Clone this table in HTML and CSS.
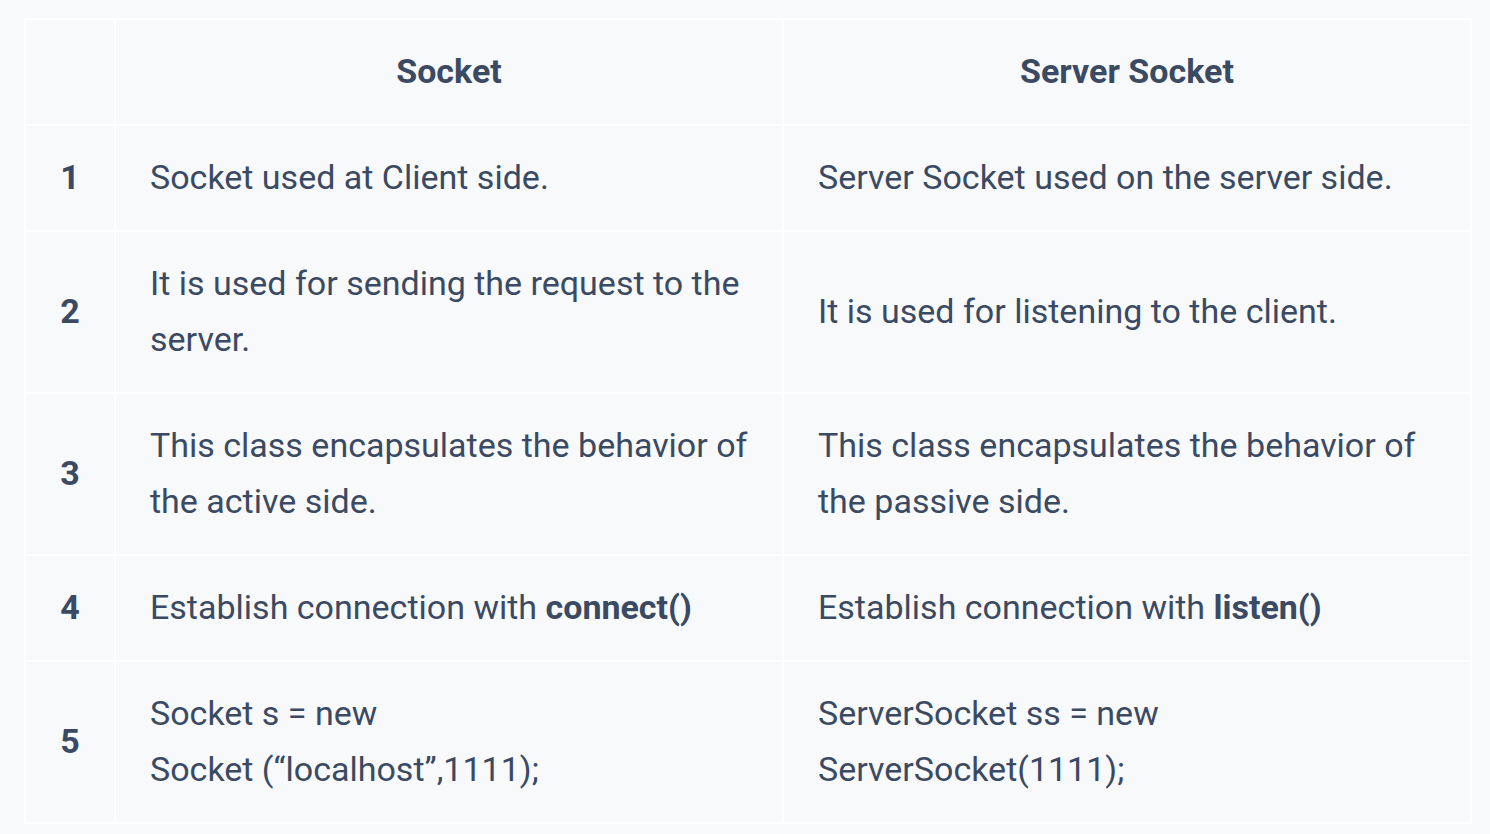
FILE: index.html
```html
<!DOCTYPE html>
<html>
<head>
<meta charset="utf-8">
<link rel="stylesheet" href="styles.css">
</head>
<body>
<div class="table">
  <div class="cell num"><div></div></div>
  <div class="cell head"><div>Socket</div></div>
  <div class="cell head"><div>Server Socket</div></div>

  <div class="cell num"><div>1</div></div>
  <div class="cell"><div>Socket used at Client side.</div></div>
  <div class="cell"><div>Server Socket used on the server side.</div></div>

  <div class="cell num"><div>2</div></div>
  <div class="cell"><div>It is used for sending the request to the server.</div></div>
  <div class="cell"><div>It is used for listening to the client.</div></div>

  <div class="cell num"><div>3</div></div>
  <div class="cell"><div>This class encapsulates the behavior of the active side.</div></div>
  <div class="cell"><div>This class encapsulates the behavior of the passive side.</div></div>

  <div class="cell num"><div>4</div></div>
  <div class="cell"><div>Establish connection with <b>connect()</b></div></div>
  <div class="cell"><div>Establish connection with <b>listen()</b></div></div>

  <div class="cell num"><div>5</div></div>
  <div class="cell"><div>Socket s = new<br>Socket (“localhost”,1111);</div></div>
  <div class="cell"><div>ServerSocket ss = new<br>ServerSocket(1111);</div></div>
</div>
</body>
</html>
```
FILE: styles.css
```css
html, body {
  margin: 0;
  padding: 0;
  background: #f8f9fb;
}
body {
  padding: 18px 0 0 24px;
  font-family: Roboto, "Liberation Sans", sans-serif;
  color: #3b4a63;
}
.table {
  display: grid;
  grid-template-columns: 88px 666px 686px;
  gap: 2px;
  padding: 2px;
  background: #ffffff;
  width: max-content;
}
.cell {
  background: #f8f9fb;
  padding: 23px 30px 25px 34px;
  font-size: 34px;
  line-height: 56px;
  display: flex;
  flex-direction: column;
  justify-content: center;
}
.cell b {
  font-weight: 700;
}
.head {
  font-weight: 700;
  text-align: center;
  padding-left: 32px;
  padding-right: 32px;
}
.num {
  font-weight: 700;
  padding-left: 0;
  padding-right: 0;
  text-align: center;
}
```
